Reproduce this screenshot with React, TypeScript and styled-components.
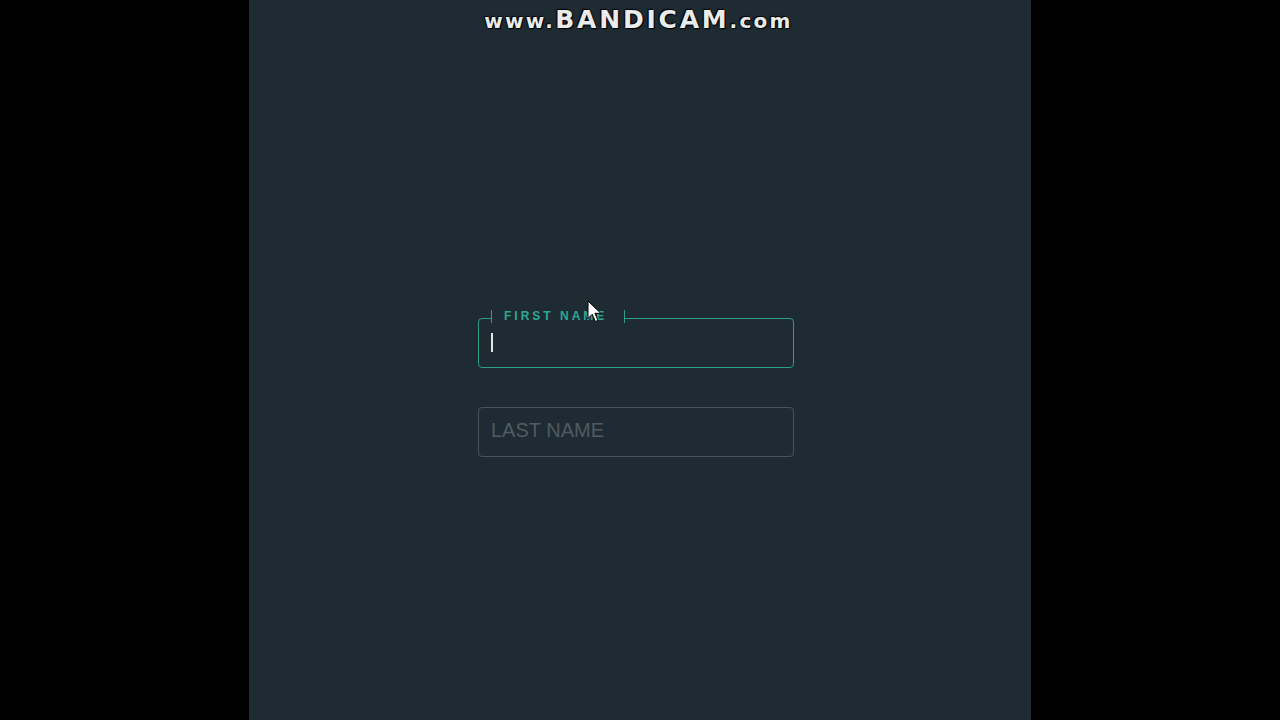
import React from 'react';
import styled, { createGlobalStyle } from 'styled-components';

const GlobalStyle = createGlobalStyle`
    html, body {
        margin: 0;
        padding: 0;
        background: #000;
        height: 100%;
        overflow: hidden;
    }
    #root {
        height: 100%;
    }
`;

const Screen = styled.div`
    height: 720px;
    display: flex;
    justify-content: center;
    background: #000;
`;

const Panel = styled.main`
    position: relative;
    width: 782px;
    height: 720px;
    background: #1e2b33;
    display: flex;
    flex-direction: column;
`;

const Watermark = styled.div`
    align-self: center;
    margin: 5px 0 0 -3px;
    font-family: "DejaVu Sans", "Liberation Sans", sans-serif;
    font-weight: bold;
    font-size: 25px;
    letter-spacing: 2.8px;
    color: #e8ecec;
    text-shadow: 0 0 2px #000, 1px 1px 1px #000, -1px -1px 1px #000;
    line-height: 30px;

    small {
        font-size: 20px;
        letter-spacing: 2.3px;
    }
`;

const Form = styled.form`
    display: flex;
    flex-direction: column;
    gap: 39px;
    width: 316px;
    margin: 282px 0 0 229px;
`;

const Field = styled.div`
    position: relative;
`;

const Input = styled.input<{ $active?: boolean }>`
    box-sizing: border-box;
    width: 316px;
    height: 50px;
    padding: 0 12px 4px;
    border: 1px solid ${p => (p.$active ? '#2c9f8b' : '#45545b')};
    border-radius: 4px;
    background: transparent;
    color: #d9e2e4;
    caret-color: #e0e6e8;
    font-family: "Liberation Sans", Arial, sans-serif;
    font-size: 20px;
    outline: none;

    &::placeholder {
        color: #4e5b61;
    }
`;

const FloatLabel = styled.label`
    position: absolute;
    left: 13px;
    top: -8px;
    box-sizing: border-box;
    width: 134px;
    height: 13px;
    padding-left: 12px;
    border-left: 1px solid #2c9f8b;
    border-right: 1px solid #2c9f8b;
    background: #1e2b33;
    color: #2ea892;
    font-family: "Liberation Sans", Arial, sans-serif;
    font-weight: bold;
    font-size: 12px;
    line-height: 13px;
    letter-spacing: 3px;
`;

const Caret = styled.span`
    position: absolute;
    left: 13px;
    top: 15px;
    width: 2px;
    height: 19px;
    background: #dfe5e7;
`;

const Pointer = styled.svg`
    position: absolute;
    left: 338px;
    top: 300px;
`;

const App = (): JSX.Element => {
    return (
        <>
            <GlobalStyle />
            <Screen>
                <Panel>
                    <Watermark>
                        <small>www.</small>BANDICAM<small>.com</small>
                    </Watermark>
                    <Form onSubmit={e => e.preventDefault()}>
                        <Field>
                            <FloatLabel htmlFor="first">FIRST NAME</FloatLabel>
                            <Input id="first" $active />
                            <Caret />
                        </Field>
                        <Field>
                            <Input id="last" placeholder="LAST NAME" />
                        </Field>
                    </Form>
                    <Pointer width="16" height="24" viewBox="0 0 16 24">
                        <path
                            d="M1 1 L1 18.5 L5.2 14.3 L8.4 21.5 L11 20.4 L7.9 13.3 L13.8 13.3 Z"
                            fill="#fff"
                            stroke="#000"
                            strokeWidth="1"
                            strokeLinejoin="round"
                        />
                    </Pointer>
                </Panel>
            </Screen>
        </>
    );
};

export default App;
